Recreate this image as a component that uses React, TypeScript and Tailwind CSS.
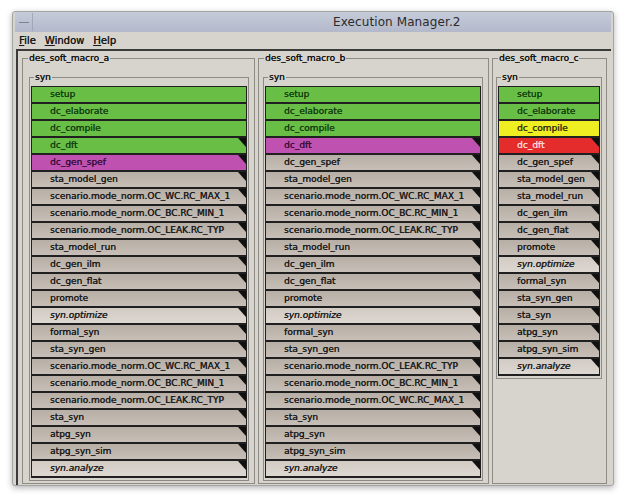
import React from "react";

type Row = { n: string; c?: "g" | "m" | "y" | "r"; i?: boolean };

const WC = "scenario.mode_norm.OC_WC.RC_MAX_1";
const BC = "scenario.mode_norm.OC_BC.RC_MIN_1";
const LK = "scenario.mode_norm.OC_LEAK.RC_TYP";

const colA: Row[] = [
  { n: "setup", c: "g" },
  { n: "dc_elaborate", c: "g" },
  { n: "dc_compile", c: "g" },
  { n: "dc_dft", c: "g" },
  { n: "dc_gen_spef", c: "m" },
  { n: "sta_model_gen" },
  { n: WC },
  { n: BC },
  { n: LK },
  { n: "sta_model_run" },
  { n: "dc_gen_ilm" },
  { n: "dc_gen_flat" },
  { n: "promote" },
  { n: "syn.optimize", i: true },
  { n: "formal_syn" },
  { n: "sta_syn_gen" },
  { n: WC },
  { n: BC },
  { n: LK },
  { n: "sta_syn" },
  { n: "atpg_syn" },
  { n: "atpg_syn_sim" },
  { n: "syn.analyze", i: true },
];

const colB: Row[] = [
  { n: "setup", c: "g" },
  { n: "dc_elaborate", c: "g" },
  { n: "dc_compile", c: "g" },
  { n: "dc_dft", c: "m" },
  { n: "dc_gen_spef" },
  { n: "sta_model_gen" },
  { n: WC },
  { n: BC },
  { n: LK },
  { n: "sta_model_run" },
  { n: "dc_gen_ilm" },
  { n: "dc_gen_flat" },
  { n: "promote" },
  { n: "syn.optimize", i: true },
  { n: "formal_syn" },
  { n: "sta_syn_gen" },
  { n: LK },
  { n: BC },
  { n: WC },
  { n: "sta_syn" },
  { n: "atpg_syn" },
  { n: "atpg_syn_sim" },
  { n: "syn.analyze", i: true },
];

const colC: Row[] = [
  { n: "setup", c: "g" },
  { n: "dc_elaborate", c: "g" },
  { n: "dc_compile", c: "y" },
  { n: "dc_dft", c: "r" },
  { n: "dc_gen_spef" },
  { n: "sta_model_gen" },
  { n: "sta_model_run" },
  { n: "dc_gen_ilm" },
  { n: "dc_gen_flat" },
  { n: "promote" },
  { n: "syn.optimize", i: true },
  { n: "formal_syn" },
  { n: "sta_syn_gen" },
  { n: "sta_syn" },
  { n: "atpg_syn" },
  { n: "atpg_syn_sim" },
  { n: "syn.analyze", i: true },
];

function rowClass(r: Row) {
  if (r.c === "g") return "bg-[#69be46] text-[#123f10]";
  if (r.c === "m") return "bg-[#bf52b1] text-[#3a0c39]";
  if (r.c === "y") return "bg-[#eeee22] text-[#343410]";
  if (r.c === "r") return "bg-[#e42c2c] text-[#ffd8d8]";
  if (r.i) return "bg-[linear-gradient(#d2cbc4,#ddd7d1)] text-[#1a1a1a] italic";
  return "bg-[linear-gradient(#b7aea5,#c7bfb7)] text-[#1a1a1a]";
}

function TaskRow({ r, idx }: { r: Row; idx: number }) {
  return (
    <div
      className={`relative h-[17px] border-b-2 border-[#202020] pl-[18px] text-[9px] leading-[15px] whitespace-nowrap [text-shadow:0.35px_0_0_currentColor] ${rowClass(r)}`}
    >
      {r.n}
      {idx >= 3 && (
        <div className="absolute right-0 top-0 h-[9px] w-[8px] bg-[#101010] [clip-path:polygon(0_0,100%_0,100%_100%)]" />
      )}
    </div>
  );
}

function Panel({
  title,
  rows,
  w,
  pl,
  pr,
  listW,
}: {
  title: string;
  rows: Row[];
  w: string;
  pl: string;
  pr: string;
  listW: string;
}) {
  return (
    <fieldset className={`${w} min-w-0 shrink-0 border border-[#8e8a84]`}>
      <legend className="ml-[5px] px-[1px] text-[9px] leading-[11px] text-[#111] [text-shadow:0.3px_0_0_currentColor]">
        {title}
      </legend>
      <div className={`${pl} ${pr} pt-[8px]`}>
        <fieldset className="min-w-0 border border-[#8e8a84]">
          <legend className="ml-[4px] px-[1px] text-[9px] leading-[11px] text-[#111] [text-shadow:0.3px_0_0_currentColor]">
            syn
          </legend>
          <div className="px-[1px] pt-[3px] pb-[2px]">
            <div className={`${listW} border-x border-t border-[#202020]`}>
              {rows.map((r, i) => (
                <TaskRow key={i} r={r} idx={i} />
              ))}
            </div>
          </div>
        </fieldset>
      </div>
    </fieldset>
  );
}

export default function App() {
  return (
    <div className="h-[495px] w-[625px] bg-white pl-[12px] pt-[11px] font-['DejaVu_Sans',sans-serif]">
      <div className="flex h-[475px] w-[602px] flex-col rounded-[3px] border border-[#a4a4a4] bg-[#d7d4ce] px-[2px] shadow-[0_2px_6px_rgba(0,0,0,0.3)]">
        {/* title bar */}
        <div className="flex h-[20px] shrink-0 items-center bg-[linear-gradient(#c6cbd9,#b3b9cb)]">
          <div className="ml-[1px] flex h-[18px] w-[17px] items-center justify-center border-r border-[#a2a7b6]">
            <div className="h-[1px] w-[10px] bg-[#7d8190]" />
          </div>
          <div className="ml-[300px] text-[12px] leading-[20px] tracking-[0.1px] text-[#2b2b2b]">
            Execution Manager.2
          </div>
        </div>
        {/* menu bar */}
        <div className="flex h-[17px] shrink-0 items-center gap-[9px] pl-[4px] text-[10px] leading-[17px] text-[#1a1a1a] [text-shadow:0.3px_0_0_currentColor]">
          <span>
            <span className="underline">F</span>ile
          </span>
          <span>
            <span className="underline">W</span>indow
          </span>
          <span>
            <span className="underline">H</span>elp
          </span>
        </div>
        {/* content frame */}
        <div className="ml-[1px] flex min-h-0 flex-1 gap-[3px] border-l-2 border-t-2 border-[#3a3a3a] pb-[1px] pl-[4px] pt-[2px]">
          <Panel title="des_soft_macro_a" rows={colA} w="w-[233px]" pl="pl-[6px]" pr="pr-[5px]" listW="w-[216px]" />
          <Panel title="des_soft_macro_b" rows={colB} w="w-[231px]" pl="pl-[4px]" pr="pr-[5px]" listW="w-[216px]" />
          <Panel title="des_soft_macro_c" rows={colC} w="w-[115px]" pl="pl-[3px]" pr="pr-[4px]" listW="w-[102px]" />
        </div>
      </div>
    </div>
  );
}
